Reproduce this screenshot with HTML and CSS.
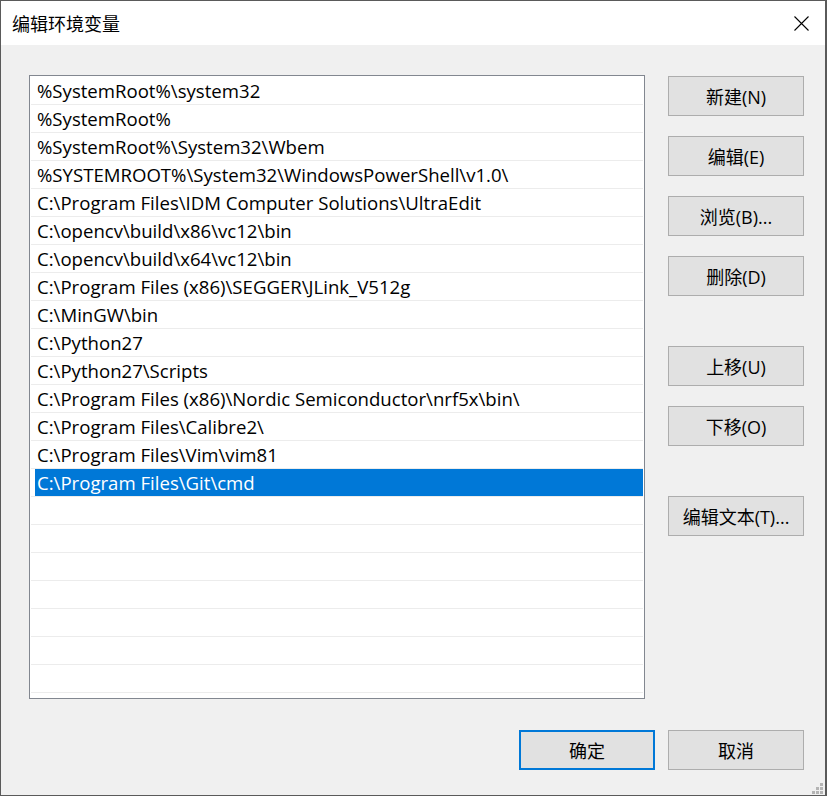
FILE: index.html
```html
<!DOCTYPE html>
<html lang="zh-CN">
<head>
<meta charset="utf-8">
<title>编辑环境变量</title>
<link rel="stylesheet" href="styles.css">
</head>
<body>
<div class="window">
  <div class="titlebar">
    <span class="title">编辑环境变量</span>
    <svg class="close" width="15" height="15" viewBox="0 0 15 15"><path d="M0.5 0.5 L14.5 14.5 M14.5 0.5 L0.5 14.5" stroke="#000" stroke-width="1.1" fill="none"/></svg>
  </div>
  <div class="client">
    <div class="main">
      <div class="listbox">
        <div class="row"><span class="cell">%SystemRoot%\system32</span></div>
        <div class="row"><span class="cell">%SystemRoot%</span></div>
        <div class="row"><span class="cell">%SystemRoot%\System32\Wbem</span></div>
        <div class="row"><span class="cell">%SYSTEMROOT%\System32\WindowsPowerShell\v1.0\</span></div>
        <div class="row"><span class="cell">C:\Program Files\IDM Computer Solutions\UltraEdit</span></div>
        <div class="row"><span class="cell">C:\opencv\build\x86\vc12\bin</span></div>
        <div class="row"><span class="cell">C:\opencv\build\x64\vc12\bin</span></div>
        <div class="row"><span class="cell">C:\Program Files (x86)\SEGGER\JLink_V512g</span></div>
        <div class="row"><span class="cell">C:\MinGW\bin</span></div>
        <div class="row"><span class="cell">C:\Python27</span></div>
        <div class="row"><span class="cell">C:\Python27\Scripts</span></div>
        <div class="row"><span class="cell">C:\Program Files (x86)\Nordic Semiconductor\nrf5x\bin\</span></div>
        <div class="row"><span class="cell">C:\Program Files\Calibre2\</span></div>
        <div class="row"><span class="cell">C:\Program Files\Vim\vim81</span></div>
        <div class="row sel"><span class="cell">C:\Program Files\Git\cmd</span></div>
        <div class="row"></div>
        <div class="row"></div>
        <div class="row"></div>
        <div class="row"></div>
        <div class="row"></div>
        <div class="row"></div>
        <div class="row"></div>
        <div class="row"></div>
      </div>
      <div class="side">
        <div class="group">
          <button class="btn">新建(N)</button>
          <button class="btn">编辑(E)</button>
          <button class="btn">浏览(B)...</button>
          <button class="btn">删除(D)</button>
        </div>
        <div class="group group-move">
          <button class="btn">上移(U)</button>
          <button class="btn">下移(O)</button>
        </div>
        <div class="group group-text">
          <button class="btn">编辑文本(T)...</button>
        </div>
      </div>
    </div>
    <div class="footer">
      <button class="btn default">确定</button>
      <button class="btn">取消</button>
    </div>
    <div class="grip">
      <i class="d1"></i><i class="d2"></i><i class="d3"></i><i class="d4"></i><i class="d5"></i><i class="d6"></i>
    </div>
  </div>
</div>
</body>
</html>
```

FILE: styles.css
```css
* { box-sizing: border-box; }
html, body { margin: 0; padding: 0; background: #f0f0f0; }
body {
  font-family: "Open Sans", "Noto Sans CJK SC", sans-serif;
  font-size: 18px;
  color: #000;
}
.window {
  width: 827px;
  height: 796px;
  border: 1px solid #5a5a5a;
  border-right-width: 2px;
  display: flex;
  flex-direction: column;
  background: #f0f0f0;
}
.titlebar {
  height: 44px;
  flex: 0 0 44px;
  background: #fff;
  display: flex;
  align-items: center;
  justify-content: space-between;
  padding: 0 16px 0 11px;
}
.title {
  font-family: "Noto Sans CJK SC", sans-serif;
  font-size: 18px;
  line-height: 24px;
  margin-top: -1px;
}
.close { display: block; margin-top: 1px; }
.client {
  position: relative;
  flex: 1;
  padding: 30px 21px 0 28px;
}
.main {
  display: flex;
  gap: 23px;
}
.listbox {
  flex: 0 0 616px;
  width: 616px;
  height: 624px;
  border: 1px solid #828790;
  background: #fff;
  padding: 1px 1px 0 1px;
  overflow: hidden;
}
.row {
  height: 28px;
  border-bottom: 1px solid #ececec;
  padding-left: 4px;
}
.cell {
  display: block;
  height: 27px;
  line-height: 28px;
  padding-left: 2px;
  white-space: nowrap;
  font-size: 18.6px;
}
.row.sel .cell {
  background: #0078d7;
  color: #fff;
}
.side {
  flex: 0 0 136px;
  width: 136px;
  display: flex;
  flex-direction: column;
  padding-top: 1px;
}
.group {
  display: flex;
  flex-direction: column;
  gap: 20px;
}
.group-move { margin-top: 50px; }
.group-text { margin-top: 50px; }
.btn {
  width: 136px;
  height: 40px;
  border: 1px solid #adadad;
  background: #e1e1e1;
  font-family: "Open Sans", "Noto Sans CJK SC", sans-serif;
  font-size: 18px;
  color: #000;
  padding: 0;
  margin: 0;
}
.btn.default {
  border: 2px solid #0078d7;
}
.footer {
  display: flex;
  justify-content: flex-end;
  gap: 13px;
  margin-top: 31px;
}
.grip {
  position: absolute;
  right: 2px;
  bottom: 1px;
  width: 11px;
  height: 11px;
}
.grip i {
  position: absolute;
  width: 3px;
  height: 3px;
  background: #b4b4b4;
}
.grip .d1 { right: 0; top: 0; }
.grip .d2 { right: 0; top: 4px; }
.grip .d3 { right: 4px; top: 4px; }
.grip .d4 { right: 0; top: 8px; }
.grip .d5 { right: 4px; top: 8px; }
.grip .d6 { right: 8px; top: 8px; }
```
